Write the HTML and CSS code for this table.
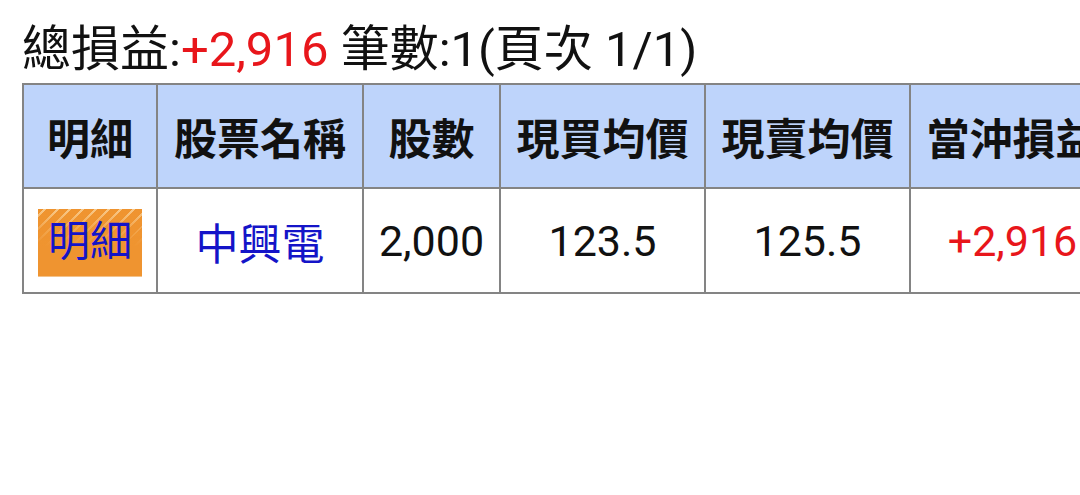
FILE: index.html
```html
<!DOCTYPE html>
<html lang="zh-Hant">
<head>
<meta charset="utf-8">
<title>當沖損益</title>
<link rel="stylesheet" href="styles.css">
</head>
<body>
<div class="page">
  <div class="summary">總損益:<span class="up">+2,916</span> 筆數:1(頁次 1/1)</div>
  <div class="table-wrap">
    <table class="grid">
      <colgroup>
        <col class="c-detail">
        <col class="c-name">
        <col class="c-qty">
        <col class="c-price">
        <col class="c-price">
        <col class="c-price">
      </colgroup>
      <thead>
        <tr>
          <th>明細</th>
          <th>股票名稱</th>
          <th>股數</th>
          <th>現買均價</th>
          <th>現賣均價</th>
          <th>當沖損益</th>
        </tr>
      </thead>
      <tbody>
        <tr>
          <td><span class="btn">明細</span></td>
          <td class="name">中興電</td>
          <td>2,000</td>
          <td>123.5</td>
          <td>125.5</td>
          <td class="up">+2,916</td>
        </tr>
      </tbody>
    </table>
  </div>
</div>
</body>
</html>
```

FILE: styles.css
```css
html, body {
  margin: 0;
  padding: 0;
  background: #ffffff;
  overflow: hidden;
}

body {
  font-family: Roboto, "Noto Sans CJK TC", sans-serif;
  color: #111111;
}

.page {
  padding: 25px 0 0 22px;
}

.summary {
  font-size: 49px;
  line-height: 50px;
  white-space: nowrap;
  letter-spacing: 0;
}

.up {
  color: #e8161b;
}

.table-wrap {
  margin-top: 8px;
  width: 1200px;
}

.grid {
  border-collapse: collapse;
  table-layout: fixed;
  width: 1094px;
}

.c-detail { width: 134px; }
.c-name { width: 206px; }
.c-qty { width: 137px; }
.c-price { width: 205px; }

.grid th,
.grid td {
  border: 2px solid #848484;
  text-align: center;
  vertical-align: middle;
  padding: 0;
  white-space: nowrap;
  overflow: hidden;
}

.grid th {
  background: #bed4fb;
  font-size: 43px;
  font-weight: 700;
  height: 102px;
  color: #111111;
}

.grid td {
  font-size: 43px;
  font-weight: 400;
  height: 103px;
}

.grid td.name {
  color: #1414c8;
}

.btn {
  display: inline-flex;
  align-items: center;
  justify-content: center;
  width: 104px;
  height: 68px;
  margin-top: 4px;
  color: #1414c8;
  font-size: 42px;
  line-height: 1;
  background:
    linear-gradient(to bottom, rgba(239, 148, 48, 0) 0%, rgba(239, 148, 48, 0.6) 25%, #ef9430 55%),
    repeating-linear-gradient(-45deg, #ef9430 0, #ef9430 7px, #f8c98a 7px, #f8c98a 9px);
  background-color: #ef9430;
  border-bottom: 1px solid #f3c28a;
  box-sizing: border-box;
}
```
